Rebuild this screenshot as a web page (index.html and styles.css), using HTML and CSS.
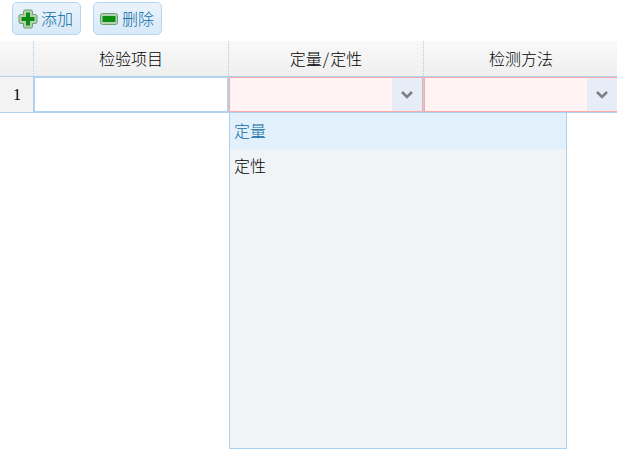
FILE: index.html
```html
<!DOCTYPE html>
<html lang="zh">
    <head>
        <title>检验项目</title>
        <meta charset="UTF-8">
        <link rel="stylesheet" href="styles.css">
    </head>
    <body>
        <div class="toolbar">
            <a class="btn" href="#">
                <svg width="20" height="20" viewBox="0 0 20 20">
                    <path d="M7 1h6a1.500 1.500 0 0 1 1.500 1.500v3h3a1.500 1.500 0 0 1 1.500 1.500v6a1.500 1.500 0 0 1-1.500 1.500h-3v3a1.500 1.500 0 0 1-1.500 1.500H7a1.500 1.500 0 0 1-1.500-1.500v-3h-3A1.500 1.500 0 0 1 1 13V7a1.500 1.500 0 0 1 1.500-1.500h3v-3A1.500 1.500 0 0 1 7 1z" fill="#b4d0b1" stroke="#6b9e6e"/>
                    <path d="M8 3.500h4v4.500h4.500v4H12v4.500H8V12H3.500V8H8z" fill="#0b8c12"/>
                </svg>
                <span>添加</span>
            </a>
            <a class="btn" href="#">
                <svg width="20" height="20" viewBox="0 0 20 20">
                    <rect x="1.500" y="4.500" width="17" height="11" rx="2" fill="#b5d2b2" stroke="#6b9e6e"/>
                    <rect x="3.500" y="7" width="13" height="6" fill="#0b8c12"/>
                </svg>
                <span>删除</span>
            </a>
        </div>
        <div class="grid">
            <div class="head">
                <div class="corner"></div>
                <div class="th">检验项目</div>
                <div class="th">定量<span class="slash">/</span>定性</div>
                <div class="th">检测方法</div>
            </div>
            <div class="row">
                <div class="num">1</div>
                <div class="cell"><div class="input"></div></div>
                <div class="cell">
                    <div class="input invalid">
                        <span class="arrow"><svg width="14" height="10" viewBox="0 0 14 10"><path d="M2 2l5 5 5-5" fill="none" stroke="#7d7f85" stroke-width="2.600"/></svg></span>
                    </div>
                    <ul class="menu">
                        <li class="active">定量</li>
                        <li>定性</li>
                    </ul>
                </div>
                <div class="cell">
                    <div class="input invalid">
                        <span class="arrow"><svg width="14" height="10" viewBox="0 0 14 10"><path d="M2 2l5 5 5-5" fill="none" stroke="#7d7f85" stroke-width="2.600"/></svg></span>
                    </div>
                </div>
            </div>
        </div>
    </body>
</html>
```

FILE: styles.css
```css
body,ul{margin: 0;padding: 0}
li{list-style: none}
a{text-decoration: none}

html,body{height: 100%;overflow: hidden;background: white}
body{font: 300 16px/20px "Noto Sans CJK SC","Liberation Sans",sans-serif;color: #000}

.toolbar{height: 41px;box-sizing: border-box;padding: 2px 0 0 12px;display: flex;gap: 12px;align-items: flex-start}
.btn{width: 69px;height: 33px;box-sizing: border-box;border: 1px solid #b5d5f0;border-radius: 5px;
background: linear-gradient(#eaf3fb,#d8e9f8);color: #0a6aa6;display: flex;align-items: center;padding-left: 5px;gap: 3px}
.btn svg{flex: none}
.btn span{margin-bottom: 2px}

.head,.row{display: grid;grid-template-columns: 33px 195px 195px 195px}
.head{height: 35px;background: linear-gradient(#f9f9f9,#efefef)}
.th{border-left: 1px dotted #a8cdec;text-align: center;line-height: 35px}
.slash{margin: 0 1px}

.row{height: 37px;box-sizing: border-box;border-top: 1px solid #b0d2ee;border-bottom: 1px solid #b0d2ee}
.num{background: #f3f3f3;text-align: center;font: 16px/35px "Liberation Serif",serif;padding-left: 1px}
.cell{position: relative;border-left: 1px solid #b0d2ee;padding: 0}
.input{height: 100%;box-sizing: border-box;border: 1px solid #b0d2ee;background: white;display: flex;justify-content: flex-end}
.invalid{border: 1px solid #ffa8a8;background: #fff3f3}
.arrow{width: 30px;background: #e6edf7;display: flex;align-items: center;justify-content: center}

.menu{position: absolute;left: 0;top: 35px;width: 338px;height: 337px;box-sizing: border-box;
border: 1px solid #a9d0ef;background: #f0f4f7}
.menu li{height: 36px;line-height: 32px;padding-left: 4px}
.menu .active{line-height: 34px;background: #e2f0fb;color: #0a6aa6}
```
